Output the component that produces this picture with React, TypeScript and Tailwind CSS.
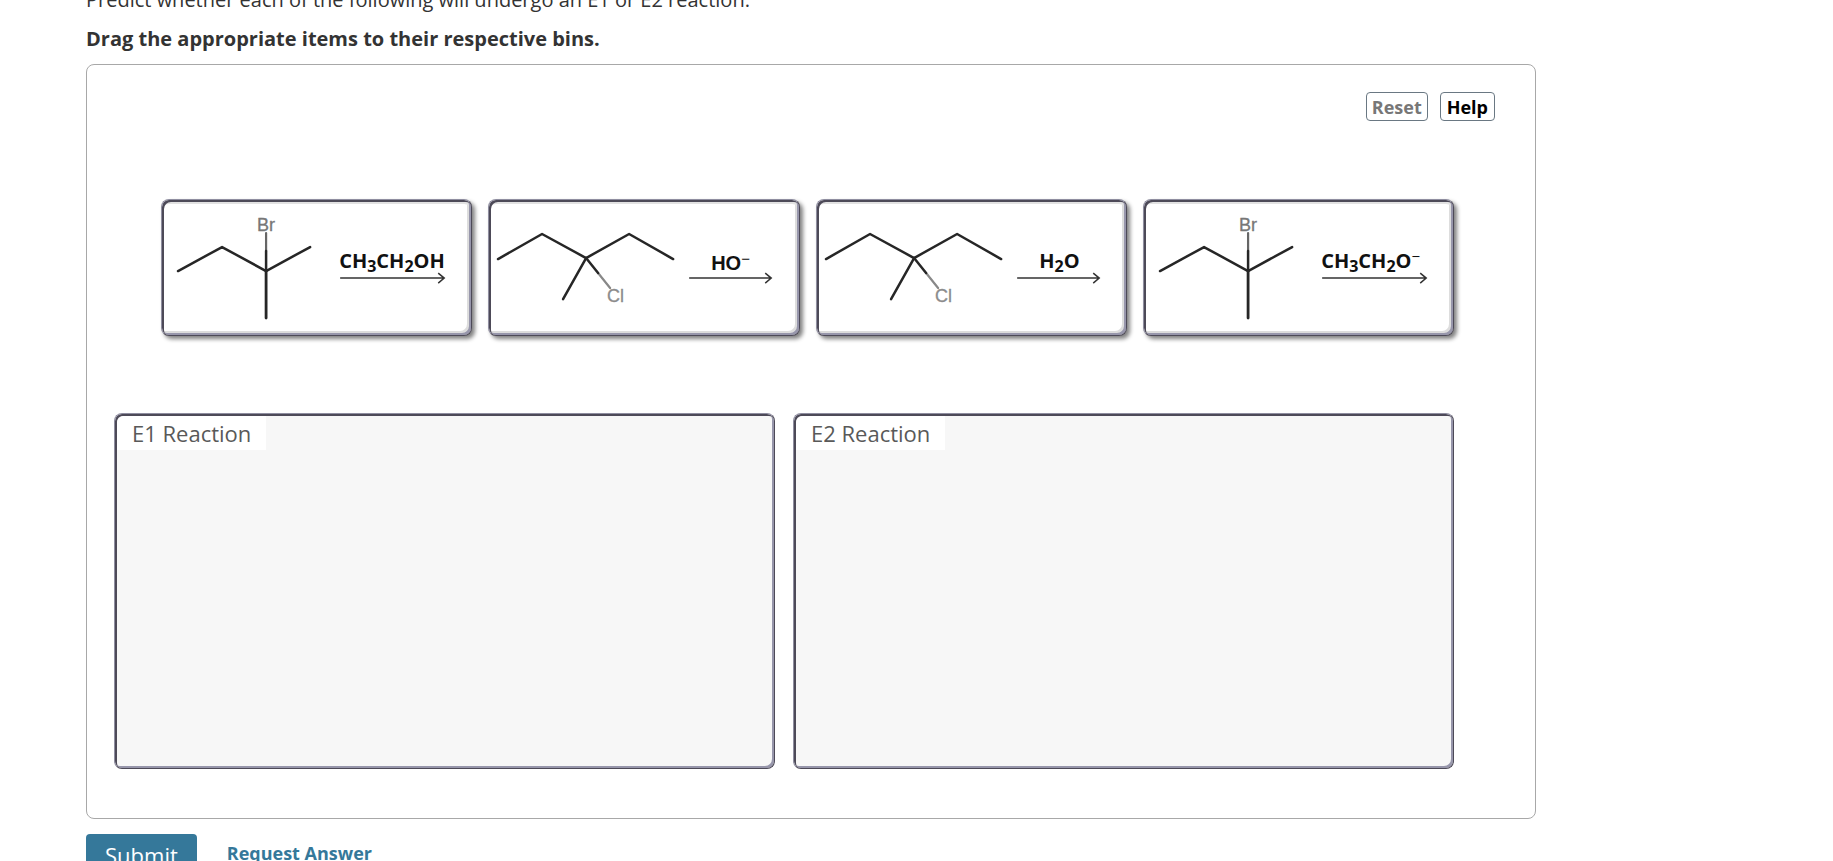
import React from "react";

type Substrate = "bromide" | "chloride";

interface Reaction {
  id: string;
  substrate: Substrate;
  reagent: React.ReactNode;
  label: string;
}

const reactions: Reaction[] = [
  {
    id: "ethanol",
    substrate: "bromide",
    label: "2-bromo-2-methylbutane with ethanol",
    reagent: (
      <text x="175" y="65">
        CH<tspan fontSize="16" dy="4">3</tspan><tspan dy="-4">CH</tspan><tspan fontSize="16" dy="4">2</tspan><tspan dy="-4">OH</tspan>
      </text>
    ),
  },
  {
    id: "hydroxide",
    substrate: "chloride",
    label: "3-chloro-3-methylpentane with hydroxide",
    reagent: (
      <text x="220" y="67" className="font-['Liberation_Sans',sans-serif]">
        HO<tspan fontSize="15" fontWeight="400" dy="-6">−</tspan>
      </text>
    ),
  },
  {
    id: "water",
    substrate: "chloride",
    label: "3-chloro-3-methylpentane with water",
    reagent: (
      <text x="220" y="65">
        H<tspan fontSize="16" dy="4">2</tspan><tspan dy="-4">O</tspan>
      </text>
    ),
  },
  {
    id: "ethoxide",
    substrate: "bromide",
    label: "2-bromo-2-methylbutane with ethoxide",
    reagent: (
      <text x="175" y="65">
        CH<tspan fontSize="16" dy="4">3</tspan><tspan dy="-4">CH</tspan><tspan fontSize="16" dy="4">2</tspan><tspan dy="-4">O</tspan><tspan fontSize="15" fontWeight="400" dy="-6">−</tspan>
      </text>
    ),
  },
];

const bins = ["E1 Reaction", "E2 Reaction"];

function Scheme({ reaction }: { reaction: Reaction }) {
  const bromide = reaction.substrate === "bromide";
  return (
    <svg viewBox="0 0 305 130" className="block w-full" role="img" aria-label={reaction.label}>
      {bromide ? (
        <g fill="none" stroke="#262626" strokeWidth="2.5" strokeLinecap="round" strokeLinejoin="round">
          <path d="M14 68 L58 44 L102 68 L146 44" />
          <path d="M102 68 V115" strokeWidth="2.8" />
          <path d="M102 48 V30" stroke="#666" strokeWidth="2.2" />
          <path d="M102 68 V48" />
          <text x="93" y="28" fontSize="18" fill="#777" stroke="#777" strokeWidth="0.3" className="font-['Liberation_Sans',sans-serif]">Br</text>
        </g>
      ) : (
        <g fill="none" stroke="#262626" strokeWidth="2.5" strokeLinecap="round" strokeLinejoin="round">
          <path d="M7 56 L51 31 L95 55 L138 31 L182 56" />
          <path d="M95 55 L72 96" />
          <path d="M107 70 L119 85" stroke="#888" strokeWidth="2.2" />
          <path d="M95 55 L107 70" />
          <text x="116" y="99" fontSize="18" fill="#8c8c8c" stroke="#8c8c8c" strokeWidth="0.3" className="font-['Liberation_Sans',sans-serif]">Cl</text>
        </g>
      )}
      <g fontSize="20" fontWeight={700} fill="#111">
        {reaction.reagent}
      </g>
      <path
        d={bromide ? "M176 75 H280 M274 70 L280 75 L274 80" : "M198 75 H280 M274 70 L280 75 L274 80"}
        fill="none"
        stroke="#333"
        strokeWidth="1.5"
      />
    </svg>
  );
}

export default function App() {
  return (
    <div className="h-screen overflow-hidden bg-white font-['Open_Sans','Noto_Sans',sans-serif] text-[#333]">
      <main className="-mt-4 ml-[86px] mr-[297px]">
        <p className="text-[20px] leading-8">Predict whether each of the following will undergo an E1 or E2 reaction.</p>
        <p className="mt-[7px] text-[20px] font-bold leading-8">Drag the appropriate items to their respective bins.</p>

        <section className="mt-[9px] rounded-lg border border-[#a8a8a8] pb-[49px] pl-7 pr-[81px] pt-[27px]">
          <div className="-mr-[41px] flex justify-end gap-3">
            <button type="button" disabled className="h-[29px] rounded border border-[#6a7883] px-[5px] text-[18px] font-bold leading-[26px] text-[#777]">Reset</button>
            <button type="button" className="h-[29px] rounded border border-[#6a7883] px-[6px] text-[18px] font-bold leading-[26px] text-black">Help</button>
          </div>

          <ul className="mt-[78px] grid grid-cols-4 gap-4 pl-[46px]">
            {reactions.map((reaction) => (
              <li
                key={reaction.id}
                draggable
                className="cursor-grab rounded-lg border border-b-[#4d4a58] border-l-[#8f8ea0] border-r-[#4d4a58] border-t-[#8f8ea0] bg-white p-[2px] pt-[3px] shadow-[3px_3px_4px_#808080,inset_2px_2px_0_#4d4a58,inset_-2px_-2px_0_#9796ab,inset_0_4px_0_#e2e2e2,inset_-4px_-4px_0_#dddddd]"
              >
                <Scheme reaction={reaction} />
              </li>
            ))}
          </ul>

          <div className="-ml-px mt-[77px] grid grid-cols-2 gap-[18px]">
            {bins.map((bin) => (
              <section
                key={bin}
                className="h-[356px] rounded-lg border border-b-[#4d4a58] border-l-[#8f8ea0] border-r-[#4d4a58] border-t-[#8f8ea0] bg-[#f7f7f7] p-[2px] shadow-[inset_2px_2px_0_#4d4a58,inset_-2px_-2px_0_#9796ab]"
              >
                <h2 className="inline-block rounded-tl-md bg-white px-[15px] text-[22px] leading-[34px] text-[#595959]">{bin}</h2>
              </section>
            ))}
          </div>
        </section>

        <div className="mt-[15px] flex items-start gap-[30px]">
          <button type="button" className="flex h-12 rounded-sm bg-[#35789a] px-[19px] pt-1 text-[22px] leading-[34px] text-white">Submit</button>
          <a href="#request-answer" className="text-[18px] font-bold leading-[38px] text-[#35789a]">Request Answer</a>
        </div>
      </main>
    </div>
  );
}
